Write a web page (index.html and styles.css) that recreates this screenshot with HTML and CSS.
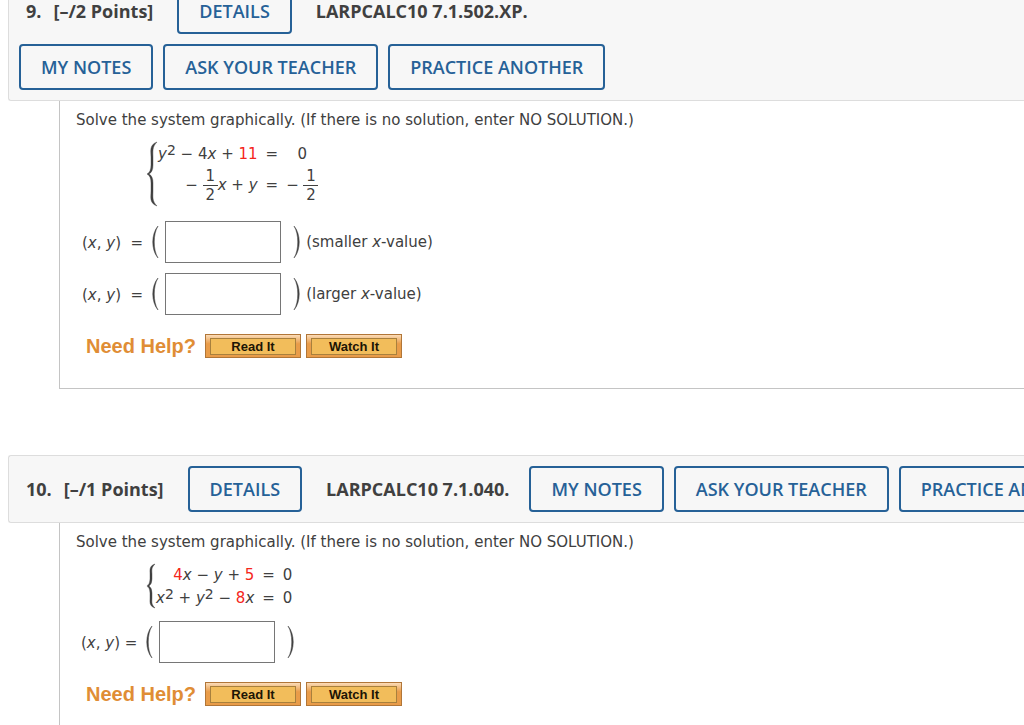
FILE: index.html
```html
<!DOCTYPE html>
<html lang="en">
<head>
    <meta charset="utf-8">
    <title>Homework</title>
    <link rel="stylesheet" href="styles.css">
</head>
<body>
    <main class="assignment">
        <section class="question">
            <header class="question-header stacked">
                <div class="header-row">
                    <span class="number">9.</span>
                    <span class="points">[–/2 Points]</span>
                    <button class="btn details">DETAILS</button>
                    <span class="code">LARPCALC10 7.1.502.XP.</span>
                </div>
                <div class="actions">
                    <button class="btn">MY NOTES</button>
                    <button class="btn">ASK YOUR TEACHER</button>
                    <button class="btn">PRACTICE ANOTHER</button>
                </div>
            </header>
            <div class="question-body">
                <p class="prompt">Solve the system graphically. (If there is no solution, enter NO SOLUTION.)</p>
                <div class="system">
                    <svg class="brace" width="12" height="66" viewBox="0 0 12 66">
                        <path d="M11 1 C3 4 5 10 5 16 V24 Q5 31 1 33 Q5 35 5 42 V50 C5 56 3 62 11 65 C6 60 7 56 7 50 V42 Q7 35 3 33 Q7 31 7 24 V16 C7 10 6 6 11 1 Z" />
                    </svg>
                    <div class="equations fractions">
                        <span class="lhs"><i>y</i><sup>2</sup> − 4<i>x</i> + <span class="red">11</span></span>
                        <span>=</span>
                        <span class="rhs">0</span>
                        <span class="lhs">−&nbsp;<span class="frac"><span>1</span><span>2</span></span><i>x</i> + <i>y</i></span>
                        <span>=</span>
                        <span class="rhs">−&nbsp;<span class="frac"><span>1</span><span>2</span></span></span>
                    </div>
                </div>
                <div class="answer">
                    <label for="q9-small">(<i>x</i>, <i>y</i>) &nbsp;=</label>
                    <svg class="paren" width="8" height="34" viewBox="0 0 8 34"><path d="M7 1 C0 9 0 25 7 33 C2 25 2 9 7 1 Z" /></svg>
                    <input type="text" id="q9-small">
                    <svg class="paren" width="8" height="34" viewBox="0 0 8 34"><path d="M1 1 C8 9 8 25 1 33 C6 25 6 9 1 1 Z" /></svg>
                    <span class="hint">(smaller <i>x</i>-value)</span>
                </div>
                <div class="answer">
                    <label for="q9-large">(<i>x</i>, <i>y</i>) &nbsp;=</label>
                    <svg class="paren" width="8" height="34" viewBox="0 0 8 34"><path d="M7 1 C0 9 0 25 7 33 C2 25 2 9 7 1 Z" /></svg>
                    <input type="text" id="q9-large">
                    <svg class="paren" width="8" height="34" viewBox="0 0 8 34"><path d="M1 1 C8 9 8 25 1 33 C6 25 6 9 1 1 Z" /></svg>
                    <span class="hint">(larger <i>x</i>-value)</span>
                </div>
                <div class="help">
                    <span class="help-title">Need Help?</span>
                    <button class="help-btn"><span>Read It</span></button>
                    <button class="help-btn"><span>Watch It</span></button>
                </div>
            </div>
        </section>

        <section class="question">
            <header class="question-header">
                <div class="header-row">
                    <span class="number">10.</span>
                    <span class="points">[–/1 Points]</span>
                    <button class="btn details">DETAILS</button>
                    <span class="code">LARPCALC10 7.1.040.</span>
                </div>
                <div class="actions">
                    <button class="btn">MY NOTES</button>
                    <button class="btn">ASK YOUR TEACHER</button>
                    <button class="btn">PRACTICE ANOTHER</button>
                </div>
            </header>
            <div class="question-body">
                <p class="prompt">Solve the system graphically. (If there is no solution, enter NO SOLUTION.)</p>
                <div class="system short">
                    <svg class="brace" width="10" height="46" viewBox="0 0 10 46">
                        <path d="M9 1 C3 3 4 7 4 11 V16 Q4 21 1 23 Q4 25 4 30 V35 C4 39 3 43 9 45 C5 41 6 39 6 35 V30 Q6 25 3 23 Q6 21 6 16 V11 C6 7 5 5 9 1 Z" />
                    </svg>
                    <div class="equations">
                        <span class="lhs"><span class="red">4</span><i>x</i> − <i>y</i> + <span class="red">5</span></span>
                        <span>=</span>
                        <span class="rhs">0</span>
                        <span class="lhs"><i>x</i><sup>2</sup> + <i>y</i><sup>2</sup> − <span class="red">8</span><i>x</i></span>
                        <span>=</span>
                        <span class="rhs">0</span>
                    </div>
                </div>
                <div class="answer compact">
                    <label for="q10-answer">(<i>x</i>, <i>y</i>) =</label>
                    <svg class="paren" width="8" height="34" viewBox="0 0 8 34"><path d="M7 1 C0 9 0 25 7 33 C2 25 2 9 7 1 Z" /></svg>
                    <input type="text" id="q10-answer">
                    <svg class="paren" width="8" height="34" viewBox="0 0 8 34"><path d="M1 1 C8 9 8 25 1 33 C6 25 6 9 1 1 Z" /></svg>
                </div>
                <div class="help">
                    <span class="help-title">Need Help?</span>
                    <button class="help-btn"><span>Read It</span></button>
                    <button class="help-btn"><span>Watch It</span></button>
                </div>
            </div>
        </section>
    </main>
</body>
</html>
```
FILE: styles.css
```css
* {
    box-sizing: border-box;
}

body {
    margin: 0;
    background: #fff;
    color: #404040;
    font-family: Verdana, "DejaVu Sans", sans-serif;
    font-size: 15px;
    line-height: 20px;
    overflow-x: hidden;
}

/* no scrollbar next to the wide headers */
html {
    scrollbar-width: none;
}

.assignment {
    margin-top: -23px;
    padding-left: 8px;
}

.question {
    margin-bottom: 66px;
}

.question-header {
    display: flex;
    gap: 20px;
    padding: 10px;
    background: #f7f7f7;
    border: 1px solid #ddd;
    border-right: none;
    border-radius: 3px 0 0 3px;
    font-family: "Open Sans", sans-serif;
    font-size: 18px;
    font-weight: 700;
    white-space: nowrap;
}

.stacked {
    flex-direction: column;
    gap: 10px;
}

.header-row,
.actions {
    display: flex;
    align-items: center;
    flex-shrink: 0;
}

.header-row {
    padding-left: 7px;
}

.actions {
    gap: 10px;
}

.number {
    margin-right: 12px;
}

.btn {
    height: 46px;
    padding: 0 20px;
    background: none;
    border: 2px solid #266197;
    border-radius: 4px;
    color: #266197;
    font-family: "Open Sans", sans-serif;
    font-size: 18px;
    font-weight: 600;
    white-space: nowrap;
    cursor: pointer;
}

.btn:hover {
    background: #e6eef5;
}

.details {
    margin: 0 24px;
}

.question-body {
    margin-left: 51px;
    padding: 9px 16px 30px;
    border-left: 1px solid #c4c4c4;
    border-bottom: 1px solid #c4c4c4;
}

.prompt {
    margin: 0 0 11px;
}

.system {
    display: flex;
    margin: 0 0 14px 70px;
}

.short {
    margin-bottom: 12px;
}

.brace {
    fill: #404040;
    stroke: #404040;
    stroke-width: 0.4;
}

.equations {
    display: grid;
    grid-template-columns: auto auto auto;
    grid-auto-rows: 23px;
    column-gap: 8px;
    align-items: center;
    white-space: nowrap;
}

.fractions {
    grid-template-rows: 26px 36px;
}

.lhs {
    text-align: right;
}

.rhs {
    text-align: center;
}

.red {
    color: #f5261b;
}

sup {
    font-size: 14px;
    line-height: 0;
    vertical-align: 4px;
}

.frac {
    display: inline-flex;
    flex-direction: column;
    width: 15px;
    vertical-align: middle;
    text-align: center;
    line-height: 18px;
}

.frac span:first-child {
    border-bottom: 1px solid #404040;
}

.answer {
    display: flex;
    align-items: center;
    margin: 0 0 10px 6px;
}

.answer label {
    margin-right: 8px;
    padding-top: 2px;
}

.answer input {
    width: 116px;
    height: 42px;
    margin: 0 12px 0 6px;
    padding: 4px 8px;
    border: 1px solid #767676;
    font-size: 15px;
}

.paren {
    fill: #404040;
    stroke: #404040;
    stroke-width: 0.5;
}

.hint {
    margin-left: 5px;
}

.compact {
    margin-left: 5px;
}

.help {
    display: flex;
    align-items: center;
    gap: 5px;
    margin: 19px 0 0 10px;
}

.help-title {
    margin-right: 4px;
    color: #e08d35;
    font-family: Arial, "Liberation Sans", sans-serif;
    font-size: 20px;
    font-weight: 700;
}

.help-btn {
    width: 96px;
    height: 24px;
    padding: 3px 4px;
    background: linear-gradient(#fbdcb8, #e99c49 40%, #e99c49);
    border: 1px solid #b17638;
    font-family: Arial, "Liberation Sans", sans-serif;
    font-size: 13px;
    font-weight: 700;
    color: #1c1505;
    cursor: pointer;
}

.help-btn span {
    display: block;
    line-height: 15px;
    background: #f2bd5b;
    border: 1px solid #a8803d;
}
```
